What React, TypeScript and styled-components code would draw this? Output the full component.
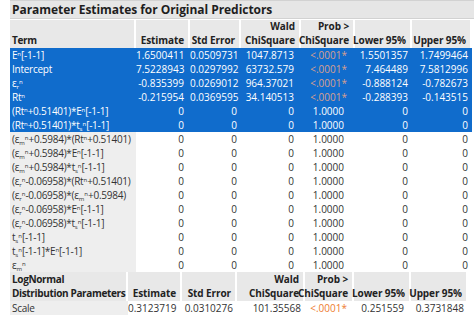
import React from "react";
import styled, { createGlobalStyle } from "styled-components";

const Global = createGlobalStyle`
  html, body { margin: 0; padding: 0; background: #ffffff; }
  body { font-family: "Open Sans", "DejaVu Sans", sans-serif; color: #333; }
`;

const Page = styled.div`
  padding: 0 2px 0 10px;
  width: 474px;
  box-sizing: border-box;
`;

const TitleBar = styled.div`
  height: 19px;
  background: #e6e6e6;
  border-top: 1px solid #d2d2d2;
  border-bottom: 1px solid #d2d2d2;
  display: flex;
  align-items: center;
  padding-left: 2px;
  font-weight: 700;
  font-size: 12px;
  letter-spacing: -0.05px;
  color: #1e1e1e;
  margin-right: -2px;
  box-sizing: border-box;
`;

const Grid = styled.div<{ $cols: string }>`
  display: grid;
  grid-template-columns: ${(p) => p.$cols};
`;

const HeadCell = styled.div<{ $first?: boolean; $h: number }>`
  height: ${(p) => p.$h}px;
  background: #e8e8e8;
  border-right: 2px solid #fff;
  box-sizing: border-box;
  display: flex;
  flex-direction: column;
  justify-content: flex-end;
  align-items: ${(p) => (p.$first ? "flex-start" : "flex-end")};
  padding: 0 ${(p) => (p.$first ? 0 : 4)}px 1px ${(p) => (p.$first ? 2 : 0)}px;
  font-weight: 700;
  font-size: 10px;
  letter-spacing: ${(p) => (p.$first ? "-0.35px" : "-0.1px")};
  line-height: 13.5px;
  color: #222;
  white-space: nowrap;
`;

const Cell = styled.div<{ $sel?: boolean; $term?: boolean; $pr?: number; $orange?: boolean }>`
  height: 14px;
  line-height: 14px;
  font-size: 10px;
  letter-spacing: ${(p) => (p.$term ? "-0.25px" : "0")};
  white-space: nowrap;
  overflow: hidden;
  box-sizing: border-box;
  text-align: ${(p) => (p.$term ? "left" : "right")};
  padding: 0 ${(p) => (p.$term ? 0 : p.$pr ?? 5)}px 0 ${(p) => (p.$term ? 2 : 0)}px;
  background: ${(p) => (p.$sel ? "#106ccc" : p.$term ? "#eeeeee" : "#ffffff")};
  color: ${(p) =>
    p.$orange ? (p.$sel ? "#d9a08f" : "#ee7d2f") : p.$sel ? "#ffffff" : "#333333"};
`;

const Sup = styled.span`
  font-size: 6px;
  letter-spacing: 0;
  position: relative;
  top: -3.5px;
`;

const Sub = styled.span`
  font-size: 6px;
  letter-spacing: 0;
  position: relative;
  top: 2px;
`;

const E = () => (
  <>
    E<Sup>n</Sup>[-1-1]
  </>
);
const Rt = () => (
  <>
    Rt<Sup>n</Sup>
  </>
);
const Er = () => (
  <>
    ε<Sub>r</Sub>
    <Sup>n</Sup>
  </>
);
const Em = () => (
  <>
    ε<Sub>m</Sub>
    <Sup>n</Sup>
  </>
);
const Ts = () => (
  <>
    t<Sub>s</Sub>
    <Sup>n</Sup>[-1-1]
  </>
);

type Row = { term: React.ReactNode; v: string[]; sel?: boolean };

const zeros = ["0", "0", "0", "1.0000", "0", "0"];

const rows: Row[] = [
  { term: <E />, v: ["1.6500411", "0.0509731", "1047.8713", "<.0001*", "1.5501357", "1.7499464"], sel: true },
  { term: "Intercept", v: ["7.5228943", "0.0297992", "63732.579", "<.0001*", "7.464489", "7.5812996"], sel: true },
  { term: <Er />, v: ["-0.835399", "0.0269012", "964.37021", "<.0001*", "-0.888124", "-0.782673"], sel: true },
  { term: <Rt />, v: ["-0.215954", "0.0369595", "34.140513", "<.0001*", "-0.288393", "-0.143515"], sel: true },
  { term: <>(<Rt />+0.51401)*<E /></>, v: zeros, sel: true },
  { term: <>(<Rt />+0.51401)*<Ts /></>, v: zeros, sel: true },
  { term: <>(<Em />+0.5984)*(<Rt />+0.51401)</>, v: zeros },
  { term: <>(<Em />+0.5984)*<E /></>, v: zeros },
  { term: <>(<Em />+0.5984)*<Ts /></>, v: zeros },
  { term: <>(<Er />-0.06958)*(<Rt />+0.51401)</>, v: zeros },
  { term: <>(<Er />-0.06958)*(<Em />+0.5984)</>, v: zeros },
  { term: <>(<Er />-0.06958)*<E /></>, v: zeros },
  { term: <>(<Er />-0.06958)*<Ts /></>, v: zeros },
  { term: <Ts />, v: zeros },
  { term: <><Ts />*<E /></>, v: zeros },
  { term: <Em />, v: zeros },
];

const topCols = "126px 54px 51px 60px 54px 57px 60px";
const botCols = "118px 54px 55px 68px 49px 57px 57px";

const padFor = (col: number, val: string, bottom?: boolean) => {
  if (col === 3) return val.startsWith("<") ? (bottom ? 7 : 8) : 11;
  if (col === 0) return 6;
  if (col === 1) return 4;
  if (col === 2) return bottom ? 4 : 7;
  if (col === 4) return bottom ? 7 : 4;
  return 4;
};

const headers = [
  ["Estimate"],
  ["Std Error"],
  ["Wald", "ChiSquare"],
  ["Prob >", "ChiSquare"],
  ["Lower 95%"],
  ["Upper 95%"],
];

export default function App() {
  return (
    <>
      <Global />
      <Page>
        <TitleBar>Parameter Estimates for Original Predictors</TitleBar>
        <Grid $cols={topCols} style={{ marginTop: 1 }}>
          <HeadCell $first $h={28}>Term</HeadCell>
          {headers.map((h, i) => (
            <HeadCell key={i} $h={28}>
              {h.map((l) => (
                <span key={l}>{l}</span>
              ))}
            </HeadCell>
          ))}
          {rows.map((r, ri) => (
            <React.Fragment key={ri}>
              <Cell $term $sel={r.sel}>{r.term}</Cell>
              {r.v.map((val, ci) => (
                <Cell
                  key={ci}
                  $sel={r.sel}
                  $orange={val.startsWith("<")}
                  $pr={padFor(ci, val)}
                >
                  {val}
                </Cell>
              ))}
            </React.Fragment>
          ))}
        </Grid>
        <Grid $cols={botCols}>
          <HeadCell $first $h={29}>
            <span>LogNormal</span>
            <span>Distribution Parameters</span>
          </HeadCell>
          {headers.map((h, i) => (
            <HeadCell key={i} $h={29}>
              {h.map((l) => (
                <span key={l}>{l}</span>
              ))}
            </HeadCell>
          ))}
          <Cell $term>Scale</Cell>
          {["0.3123719", "0.0310276", "101.35568", "<.0001*", "0.251559", "0.3731848"].map((val, ci) => (
            <Cell key={ci} $orange={val.startsWith("<")} $pr={padFor(ci, val, true)}>
              {val}
            </Cell>
          ))}
        </Grid>
      </Page>
    </>
  );
}
